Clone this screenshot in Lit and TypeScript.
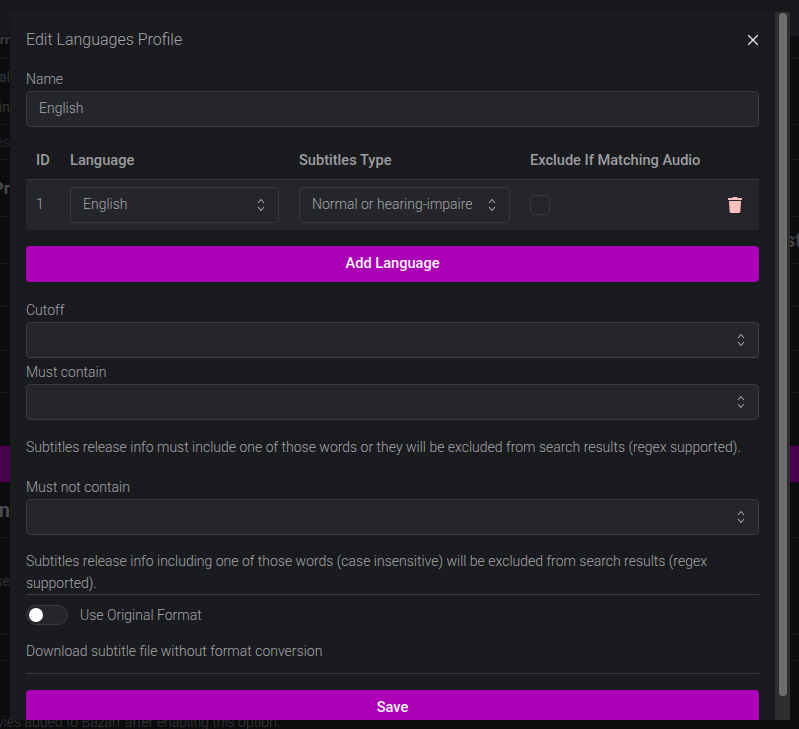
import { LitElement, html, css } from "lit";
import { customElement } from "lit/decorators.js";

const chevrons = html`<svg class="chev" viewBox="0 0 8 16" fill="none" stroke="currentColor" stroke-width="1.1"><path d="M1 6 L4 2.5 L7 6"/><path d="M1 10 L4 13.5 L7 10"/></svg>`;

@customElement("app-root")
export class AppRoot extends LitElement {
  static styles = css`
    :host { display: block; position: relative; width: 799px; height: 729px; overflow: hidden; background: #0b0c0e; font-family: Roboto, "Liberation Sans", sans-serif; font-size: 14px; font-weight: 300; color: #a5a6a9; }
    * { box-sizing: border-box; }

    /* dimmed page behind the dialog */
    .page { display: flex; flex-direction: column; height: 729px; color: #3b3c3e; font-weight: 400; }
    .topbar { height: 36px; flex: none; background: #16181b; }
    .bg-row { flex: none; display: flex; align-items: center; justify-content: space-between; border-bottom: 1px solid #17181b; white-space: nowrap; overflow: hidden; }
    .stub { width: 10px; flex: none; display: flex; justify-content: flex-end; white-space: nowrap; overflow: hidden; }
    .stack { flex-direction: column; align-items: flex-start; justify-content: flex-start; gap: 14px; padding-top: 10px; }
    .h23 { height: 23px; color: #3a3b3d; font-weight: 700; align-items: flex-start; line-height: 8px; }
    .h66 { height: 66px; color: #333436; }
    .h35 { height: 35px; color: #26272a; }
    .h57 { height: 57px; font-size: 17px; font-weight: 700; color: #4a4b4e; }
    .h47 { height: 47px; }
    .h43 { height: 43px; }
    .h44 { height: 44px; }
    .h42 { height: 42px; }
    .accent { height: 36px; flex: none; background: #4a0150; margin-top: 53px; }
    .h56 { height: 56px; font-size: 20px; font-weight: 700; color: #4a4b4e; }
    .h97 { height: 97px; color: #2d2e30; padding-bottom: 10px; }
    .h26 { height: 26px; }
    .foot { flex: 1; display: flex; align-items: flex-end; color: #3a3b3d; font-size: 14px; font-weight: 300; white-space: nowrap; overflow: hidden; }
    .off-foot { margin-left: -23px; line-height: 16px; margin-bottom: -1px; }
    .right-txt { font-size: 20px; font-weight: 700; color: #3e3f41; margin-right: -3px; }

    /* dialog */
    .dialog { position: absolute; left: 10px; top: 12px; width: 780px; height: 708px; display: flex; background: #1a1b1e; }
    .body { flex: 1; overflow: hidden; padding: 0 16px; display: flex; flex-direction: column; min-width: 0; }
    .body > * { flex: none; }
    .scroll { flex: none; width: 15px; background: #2e2e2e; padding: 1px 4px 24px 4px; }
    .thumb { width: 8px; height: 100%; background: #6e6e6e; border-radius: 4px; }

    .head { height: 57px; display: flex; align-items: center; justify-content: space-between; font-size: 16px; padding-bottom: 2px; }
    .close { width: 10px; height: 10px; margin-right: 1px; color: #e6e6e6; display: block; }

    .lbl { display: block; line-height: 20px; margin-bottom: 2px; }
    .field { height: 36px; background: #25262b; border: 1px solid #373a40; border-radius: 4px; display: flex; align-items: center; padding: 0 13px 0 12px; white-space: nowrap; overflow: hidden; }
    .chev { width: 8px; height: 16px; flex: none; margin-left: auto; display: block; }
    .txt { margin-bottom: 2px; }

    .thead, .trow { display: grid; grid-template-columns: 14px 209px 211px 1fr 16px; column-gap: 20px; padding: 0 16px 0 10px; align-items: center; }
    .thead { height: 53px; font-size: 14.6px; font-weight: 500; color: #9c9d9f; border-bottom: 1px solid #373a40; line-height: 20px; padding-top: 14px; white-space: nowrap; }
    .trow { height: 50px; background: #25262b; }
    .clip { overflow: hidden; flex: 1; min-width: 0; margin-right: 16px; }
    .chk { width: 20px; height: 20px; background: #25262b; border: 1px solid #373a40; border-radius: 4px; }
    .trash { width: 14px; height: 16px; color: #ffc0c0; display: block; justify-self: center; }

    .btn { height: 36px; border-radius: 4px; background: #ab00b5; color: #f4f4f4; font-size: 14.6px; font-weight: 500; padding-bottom: 2px; display: flex; align-items: center; justify-content: center; }
    .add { margin-top: 16px; margin-bottom: 18px; }
    .cut { border-bottom: 1px solid #41444a; }
    .gap4 { margin-top: 4px; }
    .desc { line-height: 22px; }
    .d1 { margin-top: 16px; margin-bottom: 19px; }
    .d2 { margin-top: 15px; }
    .rule { height: 1px; background: #373a40; }
    .opt { display: flex; align-items: center; gap: 12px; height: 20px; margin-top: 10px; }
    .switch { width: 42px; height: 20px; border-radius: 10px; background: #25262b; border: 1px solid #373a40; padding: 2px; flex: none; }
    .knob { width: 14px; height: 14px; border-radius: 50%; background: #fff; }
    .d3 { margin-top: 15px; margin-bottom: 11px; }
    .save { margin-top: 16px; }
  `;

  render() {
    return html`
      <div class="page">
        <div class="topbar"></div>
        <div class="bg-row h23"><span class="stub">rr</span></div>
        <div class="bg-row h66 stack"><span class="stub">Normal</span><span class="stub">Min</span></div>
        <div class="bg-row h35"><span class="stub">Res</span></div>
        <div class="bg-row h57"><span class="stub">Pr</span></div>
        <div class="bg-row h47"><span></span><span class="right-txt">st</span></div>
        <div class="bg-row h43"></div>
        <div class="bg-row h44"></div>
        <div class="bg-row h42"></div>
        <div class="accent"></div>
        <div class="bg-row h56"><span class="stub">In</span></div>
        <div class="bg-row h97"><span class="stub">Use</span></div>
        <div class="bg-row h26"></div>
        <div class="foot"><span class="off-foot">Movies added to Bazarr after enabling this option.</span></div>
      </div>

      <div class="dialog">
        <div class="body">
          <div class="head">
            <span>Edit Languages Profile</span>
            <svg class="close" viewBox="0 0 10 10" fill="none" stroke="currentColor" stroke-width="1.3"><path d="M0 0 L10 10 M10 0 L0 10"/></svg>
          </div>
          <div class="lbl">Name</div>
          <div class="field"><span class="txt">English</span></div>

          <div class="thead">
            <span>ID</span><span>Language</span><span>Subtitles Type</span><span>Exclude If Matching Audio</span><span></span>
          </div>
          <div class="trow">
            <span class="txt">1</span>
            <div class="field"><span class="clip txt">English</span>${chevrons}</div>
            <div class="field"><span class="clip txt">Normal or hearing-impaired</span>${chevrons}</div>
            <div class="chk"></div>
            <svg class="trash" viewBox="0 0 448 512" fill="currentColor"><path d="M432 32H312l-9.4-18.7A24 24 0 0 0 281.1 0H166.8a23.72 23.72 0 0 0-21.4 13.3L136 32H16A16 16 0 0 0 0 48v32a16 16 0 0 0 16 16h416a16 16 0 0 0 16-16V48a16 16 0 0 0-16-16zM53.2 467a48 48 0 0 0 47.9 45h245.8a48 48 0 0 0 47.9-45L416 128H32z"/></svg>
          </div>

          <div class="btn add">Add Language</div>

          <div class="lbl">Cutoff</div>
          <div class="field cut">${chevrons}</div>
          <div class="lbl gap4">Must contain</div>
          <div class="field">${chevrons}</div>
          <div class="desc d1">Subtitles release info must include one of those words or they will be excluded from search results (regex supported).</div>
          <div class="lbl">Must not contain</div>
          <div class="field">${chevrons}</div>
          <div class="desc d2">Subtitles release info including one of those words (case insensitive) will be excluded from search results (regex supported).</div>
          <div class="rule"></div>
          <div class="opt">
            <div class="switch"><div class="knob"></div></div>
            <span>Use Original Format</span>
          </div>
          <div class="desc d3">Download subtitle file without format conversion</div>
          <div class="rule"></div>
          <div class="btn save">Save</div>
        </div>
        <div class="scroll"><div class="thumb"></div></div>
      </div>
    `;
  }
}
